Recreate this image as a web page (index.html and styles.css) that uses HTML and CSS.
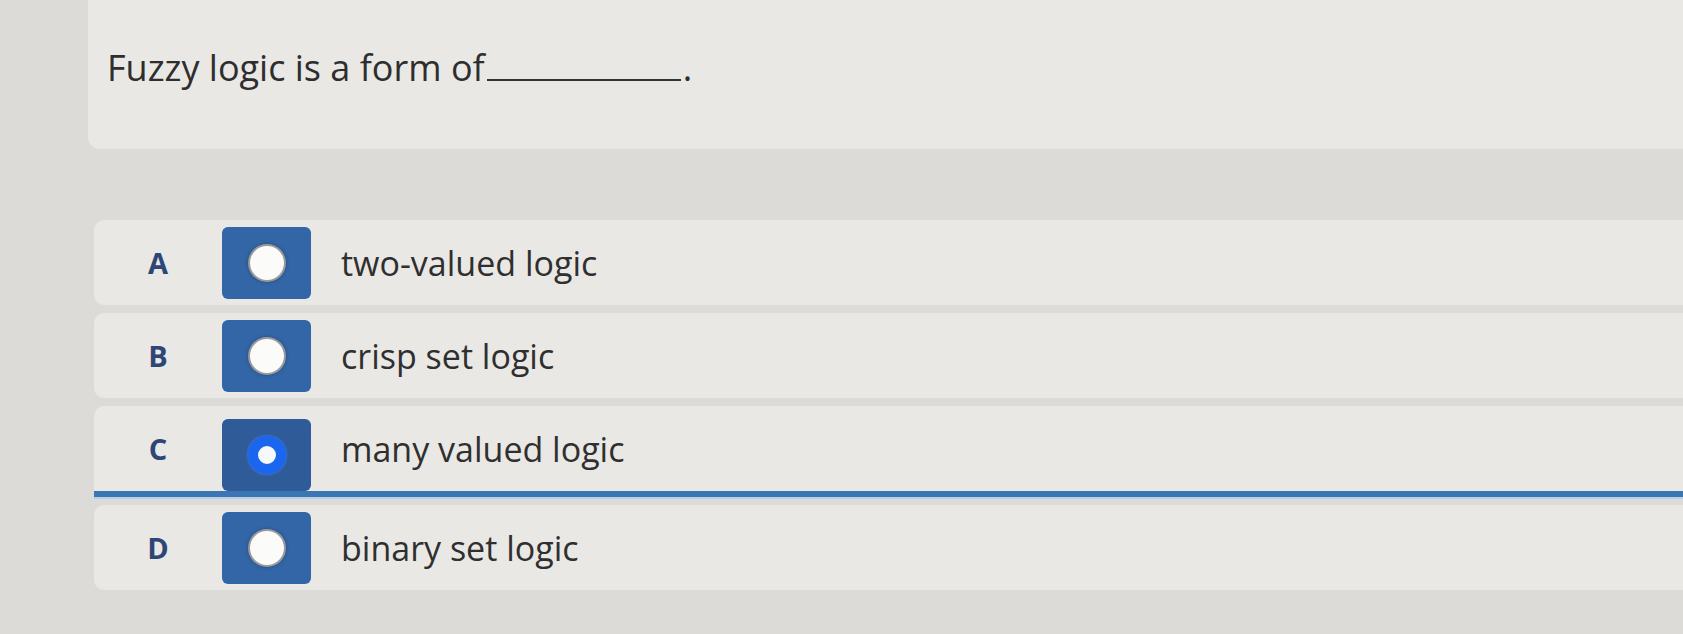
FILE: index.html
```html
<!DOCTYPE html>
<html lang="en">
<head>
<meta charset="utf-8">
<title>Fuzzy logic question</title>
<link rel="stylesheet" href="styles.css">
</head>
<body>
<div class="page">
  <div class="question">
    <p class="question-text">Fuzzy logic is a form of<span class="blank"></span>.</p>
  </div>
  <div class="options">
    <label class="option">
      <span class="letter">A</span>
      <span class="box"><span class="radio"></span></span>
      <span class="text">two-valued logic</span>
    </label>
    <label class="option">
      <span class="letter">B</span>
      <span class="box"><span class="radio"></span></span>
      <span class="text">crisp set logic</span>
    </label>
    <label class="option selected">
      <span class="letter">C</span>
      <span class="box"><span class="radio"></span></span>
      <span class="text">many valued logic</span>
    </label>
    <label class="option">
      <span class="letter">D</span>
      <span class="box"><span class="radio"></span></span>
      <span class="text">binary set logic</span>
    </label>
  </div>
</div>
</body>
</html>
```
FILE: styles.css
```css
html, body {
  margin: 0;
  padding: 0;
}
body {
  background: #dcdbd7;
  font-family: "Open Sans", "DejaVu Sans", sans-serif;
  width: 1683px;
  height: 634px;
  overflow: hidden;
}
.page {
  padding-left: 88px;
}
.question {
  height: 149px;
  background: #e9e8e5;
  border-radius: 0 0 0 12px;
  padding-left: 19px;
  box-sizing: border-box;
  padding-top: 44px;
}
.question-text {
  margin: 0;
  font-size: 36px;
  line-height: 48px;
  color: #2e2e2e;
}
.blank {
  display: inline-block;
  width: 194px;
  border-bottom: 2px solid #333;
  vertical-align: baseline;
  margin-left: 2px;
  margin-right: 2px;
}
.options {
  margin-top: 71px;
  display: flex;
  flex-direction: column;
  gap: 8px;
  padding-left: 6px;
}
.option {
  display: flex;
  align-items: center;
  height: 85px;
  background: #e9e8e5;
  border-radius: 10px 0 0 10px;
}
.option.selected {
  border-bottom: 6px solid #3a76b4;
  box-shadow: 0 2px 0 #b5cfe9;
  border-radius: 10px 0 0 0;
}
.letter {
  width: 128px;
  text-align: center;
  font-weight: 700;
  font-size: 29px;
  color: #2d4676;
}
.box {
  width: 89px;
  height: 72px;
  border-radius: 6px;
  background: #3266a6;
  display: flex;
  align-items: center;
  justify-content: center;
}
.selected .box {
  background: #2f5c98;
  align-self: flex-end;
  height: 72px;
}
.radio {
  width: 34px;
  height: 34px;
  border-radius: 50%;
  background: #fbfbfa;
  box-shadow: 0 0 0 2px #9a9a9a, 0 0 3px 3px rgba(40, 60, 100, 0.35);
}
.selected .radio {
  width: 18px;
  height: 18px;
  background: #f6f8fb;
  border: 10px solid #1b66ee;
  box-shadow: 0 0 2px 1px #3b6fd8;
}
.text {
  margin-left: 30px;
  font-size: 34px;
  color: #2f2f2f;
}
```
